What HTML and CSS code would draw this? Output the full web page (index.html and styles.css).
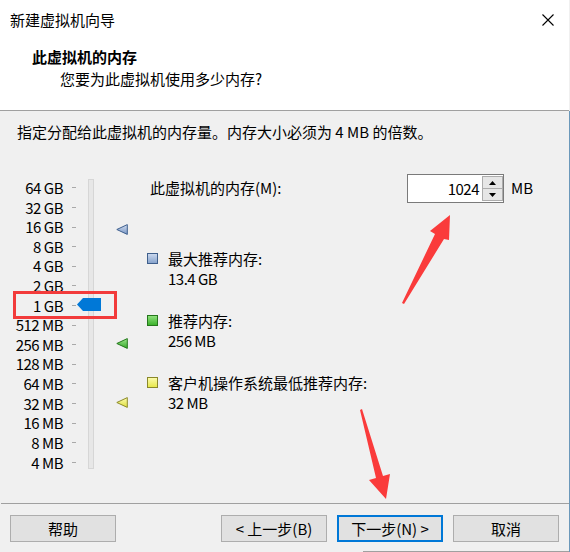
FILE: index.html
```html
<!DOCTYPE html>
<html>

	<head>
		<meta charset="UTF-8">
		<title>新建虚拟机向导</title>
		<link rel="stylesheet" href="styles.css">
	</head>

	<body>
		<div class="wizard">
			<!--标题栏-->
			<div class="titlebar">
				<span>新建虚拟机向导</span>
				<svg class="close" width="12" height="12" viewBox="0 0 12 12">
					<path d="M0.5 0.5L11.5 11.5M11.5 0.5L0.5 11.5" stroke="#000" stroke-width="1.1" fill="none" />
				</svg>
			</div>
			<!--页头-->
			<div class="header">
				<h1>此虚拟机的内存</h1>
				<p>您要为此虚拟机使用多少内存?</p>
			</div>

			<div class="main">
				<div class="content">
					<p class="intro">指定分配给此虚拟机的内存量。内存大小必须为 4 MB 的倍数。</p>
					<div class="memory">
						<!--滑块刻度-->
						<div class="scale">
							<ul class="scale-labels">
								<li>64 GB</li>
								<li>32 GB</li>
								<li>16 GB</li>
								<li>8 GB</li>
								<li>4 GB</li>
								<li>2 GB</li>
								<li>1 GB</li>
								<li>512 MB</li>
								<li>256 MB</li>
								<li>128 MB</li>
								<li>64 MB</li>
								<li>32 MB</li>
								<li>16 MB</li>
								<li>8 MB</li>
								<li>4 MB</li>
							</ul>
							<div class="scale-track"></div>

							<svg class="marker marker-max" width="12" height="11" viewBox="0 0 12 11">
								<defs>
									<linearGradient id="gMax" x1="0" y1="0" x2="0" y2="1">
										<stop offset="0" stop-color="#d3def0" />
										<stop offset="1" stop-color="#7795c4" />
									</linearGradient>
								</defs>
								<polygon points="0.8,5.5 11.3,0.6 11.3,10.4" fill="url(#gMax)" stroke="#3e5f8e" stroke-width="1" />
							</svg>
							<svg class="marker marker-rec" width="12" height="11" viewBox="0 0 12 11">
								<defs>
									<linearGradient id="gRec" x1="0" y1="0" x2="0" y2="1">
										<stop offset="0" stop-color="#9be68a" />
										<stop offset="1" stop-color="#35a82a" />
									</linearGradient>
								</defs>
								<polygon points="0.8,5.5 11.3,0.6 11.3,10.4" fill="url(#gRec)" stroke="#23781b" stroke-width="1" />
							</svg>
							<svg class="marker marker-min" width="12" height="11" viewBox="0 0 12 11">
								<defs>
									<linearGradient id="gMin" x1="0" y1="0" x2="0" y2="1">
										<stop offset="0" stop-color="#fbfbb0" />
										<stop offset="1" stop-color="#dede3c" />
									</linearGradient>
								</defs>
								<polygon points="0.8,5.5 11.3,0.6 11.3,10.4" fill="url(#gMin)" stroke="#8c8a2a" stroke-width="1" />
							</svg>

							<svg class="thumb" width="24" height="13" viewBox="0 0 24 13">
								<polygon points="0,6.5 6,0 24,0 24,13 6,13" fill="#0078d7" />
							</svg>
							<span class="highlight"></span>
						</div>

						<div class="settings">
							<div class="memory-row">
								<span class="memory-label">此虚拟机的内存(M):</span>
								<div class="spinner">
									<span class="spinner-value">1024</span>
									<div class="spin">
										<span><svg width="7" height="4" viewBox="0 0 7 4"><polygon points="3.5,0 7,4 0,4" fill="#000" /></svg></span>
										<span><svg width="7" height="4" viewBox="0 0 7 4"><polygon points="0,0 7,0 3.5,4" fill="#000" /></svg></span>
									</div>
								</div>
								<span class="unit">MB</span>
							</div>

							<ul class="legend">
								<li>
									<span class="swatch swatch-max"></span>
									<div>
										<p>最大推荐内存:</p>
										<p class="amount">13.4 GB</p>
									</div>
								</li>
								<li>
									<span class="swatch swatch-rec"></span>
									<div>
										<p>推荐内存:</p>
										<p class="amount">256 MB</p>
									</div>
								</li>
								<li>
									<span class="swatch swatch-min"></span>
									<div>
										<p>客户机操作系统最低推荐内存:</p>
										<p class="amount">32 MB</p>
									</div>
								</li>
							</ul>
						</div>
					</div>
				</div>

				<!--底部按钮-->
				<div class="footer">
					<button class="btn">帮助</button>
					<button class="btn btn-back">&lt; 上一步(B)</button>
					<button class="btn btn-next">下一步(N) &gt;</button>
					<button class="btn">取消</button>
				</div>
				<div class="footer-edge"></div>
			</div>

			<!--标注箭头-->
			<svg class="arrows" width="570" height="552" viewBox="0 0 570 552">
				<polygon points="450,215 449,240 444,239 404,304 402,303 435,234 430,231" fill="#fa3b3b" />
				<polygon points="360,410 362,409 383,476 390,474 386,499 369,480 376,478" fill="#fa3b3b" />
			</svg>
		</div>
	</body>

</html>
```

FILE: styles.css
```css
* {
	margin: 0;
	padding: 0;
	list-style: none;
	box-sizing: border-box;
}

body {
	width: 570px;
	height: 552px;
	overflow: hidden;
	font-family: "Noto Sans CJK SC", sans-serif;
	font-size: 15px;
	color: #000;
	background-color: #f0f0f0;
}

.wizard {
	position: relative;
	width: 570px;
	height: 552px;
}

/* 标题栏 + 页头 */
.titlebar {
	display: flex;
	align-items: center;
	justify-content: space-between;
	width: 569px;
	height: 40px;
	padding: 0 15px 0 10px;
	background-color: #fff;
	line-height: 20px;
}

.close {
	margin-top: -1px;
}

.header {
	width: 569px;
	height: 71px;
	padding: 6px 0 0 32px;
	background-color: #fff;
	border-bottom: 1px solid #a0a0a0;
}

.header h1 {
	font-size: 15px;
	font-weight: bold;
	line-height: 22px;
}

.header p {
	padding-left: 28px;
	line-height: 22px;
}

/* 主体 */
.main {
	width: 570px;
	border-right: 1px solid #6b98ba;
}

.content {
	height: 392px;
}

.intro {
	padding: 11px 0 0 17px;
	line-height: 20px;
}

.memory {
	display: flex;
	margin-top: 32px;
}

.scale {
	position: relative;
	display: flex;
	align-self: flex-start;
	width: 147px;
	margin-top: 4px;
}

/* 数字字形略窄一点 */
.scale-labels li,
.spinner-value,
.amount {
	letter-spacing: -0.5px;
}

.scale-labels li {
	display: flex;
	align-items: center;
	justify-content: flex-end;
	width: 76px;
	height: 19.62px;
	line-height: 19.62px;
}

.scale-labels li::after {
	content: "";
	width: 4px;
	height: 1px;
	margin-left: 9px;
	background-color: #a9a9a9;
}

.scale-track {
	width: 6px;
	height: 290px;
	margin: 1px 0 0 12px;
	background-color: #e7e7e7;
	border: 1px solid #d6d6d6;
}

.marker {
	position: absolute;
	left: 116px;
}

.marker-max {
	top: 46px;
}

.marker-rec {
	top: 160px;
}

.marker-min {
	top: 219px;
}

.thumb {
	position: absolute;
	left: 77px;
	top: 120px;
}

.highlight {
	position: absolute;
	left: 13px;
	top: 113px;
	width: 104px;
	height: 28px;
	border: 3px solid #f23b3b;
}

.settings {
	flex: 1;
}

.memory-row {
	display: flex;
	align-items: center;
	height: 29px;
	padding-left: 3px;
}

.memory-label {
	width: 257px;
	line-height: 20px;
	margin-top: -2px;
}

.spinner {
	display: flex;
	width: 97px;
	height: 29px;
	padding: 1px 0 1px 0;
	background-color: #fff;
	border: 1px solid #7a7a7a;
}

.spinner-value {
	flex: 1;
	padding-right: 3px;
	text-align: right;
	line-height: 25px;
}

.spin {
	display: flex;
	flex-direction: column;
	width: 21px;
}

.spin span {
	flex: 1;
	display: flex;
	align-items: center;
	justify-content: center;
	background-color: #e6e6e6;
	border: 1px solid #acacac;
}

.spin span + span {
	border-top: none;
}

.unit {
	margin: -2px 0 0 7px;
	line-height: 20px;
}

.legend {
	display: flex;
	flex-direction: column;
	gap: 22px;
	margin-top: 46px;
}

.legend li {
	display: flex;
	line-height: 20px;
}

.swatch {
	width: 11px;
	height: 11px;
	margin: 4px 10px 0 0;
	border: 1px solid;
}

.swatch-max {
	background: linear-gradient(#c9d7ed, #88a4cd);
	border-color: #3f5f8c;
}

.swatch-rec {
	background: linear-gradient(#8ee07b, #3cb22c);
	border-color: #25761c;
}

.swatch-min {
	background: linear-gradient(#fbfbaa, #e8e84c);
	border-color: #8a882a;
}

/* 底部按钮 */
.footer {
	display: flex;
	gap: 10px;
	margin-left: 1px;
	padding: 11px 10px 0 9px;
	border-top: 1px solid #a0a0a0;
}

.btn {
	width: 106px;
	height: 27px;
	font-family: inherit;
	font-size: 15px;
	line-height: 23px;
	color: #000;
	background-color: #e1e1e1;
	border: 1px solid #adadad;
}

.btn-back {
	margin-left: auto;
}

.btn-next {
	border: 2px solid #0078d7;
}

.footer-edge {
	height: 1px;
	margin: 9px 0 0 363px;
	background-color: #a0a0a0;
}

.arrows {
	position: absolute;
	left: 0;
	top: 0;
	pointer-events: none;
}
```
